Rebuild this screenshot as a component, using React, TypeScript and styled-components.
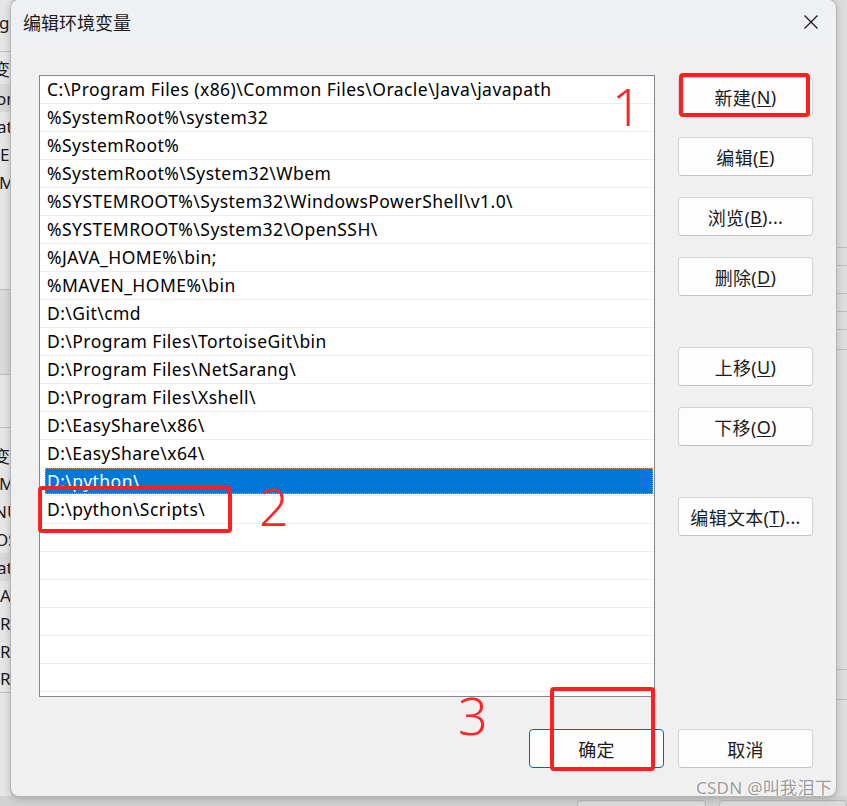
import React from 'react';
import styled, { createGlobalStyle } from 'styled-components';

const GlobalStyle = createGlobalStyle`
  html, body {
    margin: 0;
    padding: 0;
  }
  body {
    width: 847px;
    height: 806px;
    overflow: hidden;
    background: #d4d4d4;
    font-family: "Noto Sans", "Noto Sans CJK SC", sans-serif;
  }
`;

const uiFont = `"Noto Sans", "Noto Sans CJK SC", sans-serif`;

const Desktop = styled.div`
  position: relative;
  width: 847px;
  height: 806px;
  overflow: hidden;
  background: #d6d6d6;
`;

/* ---------- the window behind the dialog ---------- */

const Backdrop = styled.div`
  display: flex;
  flex-direction: column;
  width: 100%;
  height: 100%;
`;

const BgMain = styled.div`
  flex: 1;
  display: flex;
  justify-content: space-between;
`;

const BgStrip = styled.div`
  width: 11px;
  display: flex;
  flex-direction: column;
  background: #e6e6e6;
  overflow: hidden;
`;

const BgRightStrip = styled.div`
  width: 11px;
  display: flex;
  flex-direction: column;
  background: #dedede;
  overflow: hidden;
`;

const BgRow = styled.div<{ $h: number; $shade?: string; $line?: boolean }>`
  flex: none;
  height: ${p => p.$h}px;
  display: flex;
  align-items: center;
  background: ${p => p.$shade || 'transparent'};
  border-bottom: ${p => (p.$line ? '1px solid #bdbdbd' : '0')};
  box-sizing: border-box;
  overflow: hidden;
`;

const BgText = styled.span<{ $shift: number }>`
  flex: none;
  margin-left: ${p => p.$shift}px;
  font-family: ${uiFont};
  font-size: 17px;
  color: #1a1a1a;
  white-space: nowrap;
`;

const BgFooter = styled.div`
  flex: none;
  height: 10px;
  display: flex;
  align-items: flex-start;
  gap: 13px;
  padding: 4px 0 0 577px;
  box-sizing: border-box;
  background: #d2d2d2;
`;

const BgButton = styled.div`
  width: 134px;
  height: 20px;
  border: 1px solid #b8b8b8;
  border-radius: 4px;
  background: #dcdcdc;
`;

/* ---------- the dialog ---------- */

const Dialog = styled.div`
  position: absolute;
  left: 11px;
  top: 0;
  width: 825px;
  height: 796px;
  display: flex;
  flex-direction: column;
  background: #f0f0f0;
  border-radius: 8px;
  overflow: hidden;
  box-shadow: 0 0 0 1px #b4b4b4, 0 2px 8px rgba(0, 0, 0, 0.25);
`;

const TitleBar = styled.div`
  flex: none;
  height: 44px;
  display: flex;
  align-items: center;
  justify-content: space-between;
  padding: 0 16px 0 12px;
  background: #eff0f4;
`;

const Title = styled.div`
  font-family: "Noto Sans CJK SC", sans-serif;
  font-size: 18px;
  color: #1b1b1b;
  line-height: 1;
`;

const CloseButton = styled.div`
  width: 18px;
  height: 18px;
  display: flex;
  align-items: center;
  justify-content: center;
`;

const Body = styled.div`
  flex: 1;
  display: flex;
  flex-direction: column;
  padding: 31px 23px 0 28px;
`;

const Main = styled.div`
  display: flex;
  gap: 23px;
`;

const ListBox = styled.div`
  width: 616px;
  height: 622px;
  box-sizing: border-box;
  border: 1px solid #828790;
  background: #ffffff;
  overflow: hidden;
`;

const Row = styled.div`
  height: 28px;
  box-sizing: border-box;
  display: flex;
  align-items: stretch;
  padding: 0 1px 1px 5px;
  border-bottom: 1px solid #ededed;
`;

const RowLabel = styled.div<{ $selected?: boolean }>`
  flex: 1;
  display: flex;
  align-items: center;
  padding-left: 1px;
  box-sizing: border-box;
  font-family: ${uiFont};
  font-size: 17.5px;
  letter-spacing: 0.45px;
  white-space: nowrap;
  color: ${p => (p.$selected ? '#ffffff' : '#000000')};
  background: ${p => (p.$selected ? '#0078d7' : 'transparent')};
  border: 1px dotted ${p => (p.$selected ? '#c9a26b' : 'transparent')};
`;

const ButtonColumn = styled.div`
  display: flex;
  flex-direction: column;
`;

const Button = styled.div<{ $space?: number; $primary?: boolean }>`
  width: 135px;
  height: 39px;
  margin-top: ${p => p.$space ?? 0}px;
  box-sizing: border-box;
  display: flex;
  align-items: center;
  justify-content: center;
  background: #fdfdfd;
  border: 1px solid ${p => (p.$primary ? '#0067c0' : '#d3d3d3')};
  border-bottom-color: ${p => (p.$primary ? '#0067c0' : '#c2c2c2')};
  border-radius: 4px;
  font-family: ${uiFont};
  font-size: 18px;
  letter-spacing: 0.3px;
  color: #1b1b1b;

  u {
    text-underline-offset: 2px;
  }
`;

const Footer = styled.div`
  display: flex;
  justify-content: flex-end;
  gap: 14px;
  margin-top: 32px;
`;

/* ---------- annotations drawn on top ---------- */

const RedBox = styled.div<{ $x: number; $y: number; $w: number; $h: number }>`
  position: absolute;
  left: ${p => p.$x}px;
  top: ${p => p.$y}px;
  width: ${p => p.$w}px;
  height: ${p => p.$h}px;
  box-sizing: border-box;
  border: 4px solid #ff1f1f;
  border-radius: 4px;
`;

const Mark = styled.div<{ $x: number; $y: number }>`
  position: absolute;
  left: ${p => p.$x}px;
  top: ${p => p.$y}px;
  font-family: "Noto Sans", sans-serif;
  font-weight: 300;
  font-size: 52px;
  line-height: 1;
  color: #ff2424;
`;

const Watermark = styled.div`
  position: absolute;
  right: 15px;
  top: 777px;
  font-family: "Noto Sans", "Noto Sans CJK SC", sans-serif;
  font-size: 17px;
  line-height: 22px;
  letter-spacing: 0.3px;
  color: #9a9a9a;
  text-shadow: 0 0 2px #ffffff, 0 0 2px #ffffff;
`;

const paths = [
  'C:\\Program Files (x86)\\Common Files\\Oracle\\Java\\javapath',
  '%SystemRoot%\\system32',
  '%SystemRoot%',
  '%SystemRoot%\\System32\\Wbem',
  '%SYSTEMROOT%\\System32\\WindowsPowerShell\\v1.0\\',
  '%SYSTEMROOT%\\System32\\OpenSSH\\',
  '%JAVA_HOME%\\bin;',
  '%MAVEN_HOME%\\bin',
  'D:\\Git\\cmd',
  'D:\\Program Files\\TortoiseGit\\bin',
  'D:\\Program Files\\NetSarang\\',
  'D:\\Program Files\\Xshell\\',
  'D:\\EasyShare\\x86\\',
  'D:\\EasyShare\\x64\\',
  'D:\\python\\',
  'D:\\python\\Scripts\\',
];

const SELECTED = 14;
const ROW_COUNT = 23;

type BgItem = { h: number; text?: string; shade?: string; line?: boolean; shift?: number };

const leftItems: BgItem[] = [
  { h: 8 },
  { h: 28, text: 'g', shift: -1 },
  { h: 16, line: true },
  { h: 32, text: '变量', shift: -7 },
  { h: 28, text: 'on', shift: -4, shade: '#d9d9d9' },
  { h: 28, text: 'at', shift: -3 },
  { h: 28, text: 'EMP', shift: 0 },
  { h: 28, text: 'MP', shift: -1 },
  { h: 94, line: true },
  { h: 85, shade: '#dadada', line: true },
  { h: 53, line: true },
  { h: 13 },
  { h: 28, text: '变量', shift: -7 },
  { h: 28, text: 'MAVEN', shift: -1 },
  { h: 28, text: 'NUM', shift: -6 },
  { h: 28, text: 'OS', shift: -5 },
  { h: 28, text: 'at', shift: -3, shade: '#d9d9d9' },
  { h: 28, text: 'ATH', shift: 0 },
  { h: 28, text: 'RO', shift: 0 },
  { h: 28, text: 'RO', shift: 0 },
  { h: 28, text: 'RO', shift: 0, line: true },
];

const rightItems: BgItem[] = [
  { h: 248, line: true },
  { h: 18, line: true },
  { h: 28, line: true },
  { h: 18, line: true },
  { h: 18, line: true },
  { h: 20, line: true },
  { h: 320, line: true },
  { h: 30, line: true },
];

const CloseIcon = () => (
  <svg width="16" height="16" viewBox="0 0 16 16">
    <path d="M1.5 1.5 L14.5 14.5 M14.5 1.5 L1.5 14.5" stroke="#1b1b1b" strokeWidth="1.3" fill="none" />
  </svg>
);

const App: React.FC = () => {
  const rows = Array.from({ length: ROW_COUNT }, (_, i) => paths[i] ?? '');

  return (
    <Desktop>
      <GlobalStyle />
      <Backdrop>
        <BgMain>
          <BgStrip>
            {leftItems.map((item, i) => (
              <BgRow key={i} $h={item.h} $shade={item.shade} $line={item.line}>
                {item.text && <BgText $shift={item.shift ?? 0}>{item.text}</BgText>}
              </BgRow>
            ))}
          </BgStrip>
          <BgRightStrip>
            {rightItems.map((item, i) => (
              <BgRow key={i} $h={item.h} $line={item.line} />
            ))}
          </BgRightStrip>
        </BgMain>
        <BgFooter>
          <BgButton />
          <BgButton />
        </BgFooter>
      </Backdrop>

      <Dialog>
        <TitleBar>
          <Title>编辑环境变量</Title>
          <CloseButton>
            <CloseIcon />
          </CloseButton>
        </TitleBar>
        <Body>
          <Main>
            <ListBox>
              {rows.map((text, i) => (
                <Row key={i}>
                  <RowLabel $selected={i === SELECTED}>{text}</RowLabel>
                </Row>
              ))}
            </ListBox>
            <ButtonColumn>
              <Button $space={2}>新建(<u>N</u>)</Button>
              <Button $space={21}>编辑(<u>E</u>)</Button>
              <Button $space={21}>浏览(<u>B</u>)...</Button>
              <Button $space={21}>删除(<u>D</u>)</Button>
              <Button $space={51}>上移(<u>U</u>)</Button>
              <Button $space={21}>下移(<u>O</u>)</Button>
              <Button $space={51}>编辑文本(<u>T</u>)...</Button>
            </ButtonColumn>
          </Main>
          <Footer>
            <Button $primary>确定</Button>
            <Button>取消</Button>
          </Footer>
        </Body>
      </Dialog>

      <RedBox $x={679} $y={73} $w={131} $h={44} />
      <Mark $x={612} $y={80}>1</Mark>
      <RedBox $x={38} $y={486} $w={194} $h={47} />
      <Mark $x={259} $y={480}>2</Mark>
      <RedBox $x={550} $y={687} $w={105} $h={84} />
      <Mark $x={458} $y={689}>3</Mark>
      <Watermark>CSDN @叫我泪下</Watermark>
    </Desktop>
  );
};

export default App;
